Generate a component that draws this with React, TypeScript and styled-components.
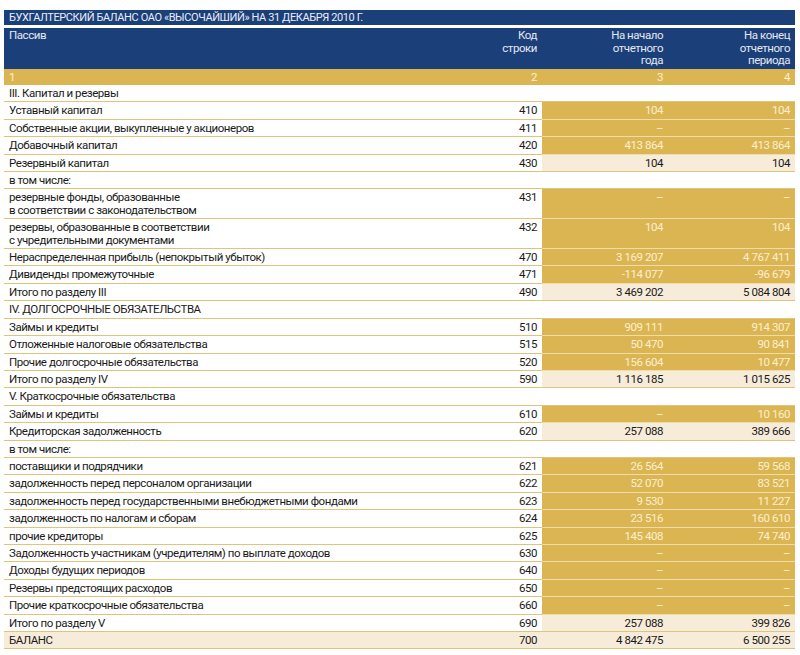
import React from 'react';
import styled, { createGlobalStyle } from 'styled-components';

type Kind = 'section' | 'gold' | 'total' | 'balance';

interface Row {
  label: string;
  code?: string;
  start?: string;
  end?: string;
  kind: Kind;
}

const rows: Row[] = [
  { label: 'III. Капитал и резервы', kind: 'section' },
  { label: 'Уставный капитал', code: '410', start: '104', end: '104', kind: 'gold' },
  { label: 'Собственные акции, выкупленные у акционеров', code: '411', start: '–', end: '–', kind: 'gold' },
  { label: 'Добавочный капитал', code: '420', start: '413 864', end: '413 864', kind: 'gold' },
  { label: 'Резервный капитал', code: '430', start: '104', end: '104', kind: 'total' },
  { label: 'в том числе:', kind: 'section' },
  { label: 'резервные фонды, образованные\nв соответствии с законодательством', code: '431', start: '–', end: '–', kind: 'gold' },
  { label: 'резервы, образованные в соответствии\nс учредительными документами', code: '432', start: '104', end: '104', kind: 'gold' },
  { label: 'Нераспределенная прибыль (непокрытый убыток)', code: '470', start: '3 169 207', end: '4 767 411', kind: 'gold' },
  { label: 'Дивиденды промежуточные', code: '471', start: '-114 077', end: '-96 679', kind: 'gold' },
  { label: 'Итого по разделу III', code: '490', start: '3 469 202', end: '5 084 804', kind: 'total' },
  { label: 'IV. ДОЛГОСРОЧНЫЕ ОБЯЗАТЕЛЬСТВА', kind: 'section' },
  { label: 'Займы и кредиты', code: '510', start: '909 111', end: '914 307', kind: 'gold' },
  { label: 'Отложенные налоговые обязательства', code: '515', start: '50 470', end: '90 841', kind: 'gold' },
  { label: 'Прочие долгосрочные обязательства', code: '520', start: '156 604', end: '10 477', kind: 'gold' },
  { label: 'Итого по разделу IV', code: '590', start: '1 116 185', end: '1 015 625', kind: 'total' },
  { label: 'V. Краткосрочные обязательства', kind: 'section' },
  { label: 'Займы и кредиты', code: '610', start: '–', end: '10 160', kind: 'gold' },
  { label: 'Кредиторская задолженность', code: '620', start: '257 088', end: '389 666', kind: 'total' },
  { label: 'в том числе:', kind: 'section' },
  { label: 'поставщики и подрядчики', code: '621', start: '26 564', end: '59 568', kind: 'gold' },
  { label: 'задолженность перед персоналом организации', code: '622', start: '52 070', end: '83 521', kind: 'gold' },
  { label: 'задолженность перед государственными внебюджетными фондами', code: '623', start: '9 530', end: '11 227', kind: 'gold' },
  { label: 'задолженность по налогам и сборам', code: '624', start: '23 516', end: '160 610', kind: 'gold' },
  { label: 'прочие кредиторы', code: '625', start: '145 408', end: '74 740', kind: 'gold' },
  { label: 'Задолженность участникам (учредителям) по выплате доходов', code: '630', start: '–', end: '–', kind: 'gold' },
  { label: 'Доходы будущих периодов', code: '640', start: '–', end: '–', kind: 'gold' },
  { label: 'Резервы предстоящих расходов', code: '650', start: '–', end: '–', kind: 'gold' },
  { label: 'Прочие краткосрочные обязательства', code: '660', start: '–', end: '–', kind: 'gold' },
  { label: 'Итого по разделу V', code: '690', start: '257 088', end: '399 826', kind: 'total' },
  { label: 'БАЛАНС', code: '700', start: '4 842 475', end: '6 500 255', kind: 'balance' },
];

const NAVY = '#1b3f79';
const GOLD = '#dcb553';
const CREAM = '#f7ecd9';
const LINE = '#dfc47c';

export default function App() {
  return (
    <>
      <GlobalStyle />
      <Page>
        <Title>Бухгалтерский баланс ОАО «Высочайший» на 31 декабря 2010 г.</Title>
        <Table>
          <HeadCell>Пассив</HeadCell>
          <HeadCell $right>Код<br />строки</HeadCell>
          <HeadCell $right>На начало<br />отчетного<br />года</HeadCell>
          <HeadCell $right>На конец<br />отчетного<br />периода</HeadCell>

          <NumCell>1</NumCell>
          <NumCell $right>2</NumCell>
          <NumCell $right>3</NumCell>
          <NumCell $right>4</NumCell>

          {rows.map((r, i) =>
            r.kind === 'section' ? (
              <SectionCell key={i}>{r.label}</SectionCell>
            ) : (
              <React.Fragment key={i}>
                <LabelCell $kind={r.kind}>{r.label}</LabelCell>
                <CodeCell $kind={r.kind}>{r.code}</CodeCell>
                <ValueCell $kind={r.kind}>{r.start}</ValueCell>
                <ValueCell $kind={r.kind}>{r.end}</ValueCell>
              </React.Fragment>
            )
          )}
        </Table>
      </Page>
    </>
  );
}

const GlobalStyle = createGlobalStyle`
  html, body {
    margin: 0;
    padding: 0;
    background: #fff;
  }
  body {
    font-family: Roboto, 'Noto Sans', sans-serif;
    font-size: 11.5px;
    letter-spacing: -0.45px;
    color: #1a1a1a;
  }
`;

const Page = styled.div`
  width: 791px;
  padding: 10px 5px 0 4px;
`;

const Title = styled.div`
  background: ${NAVY};
  color: #e9edf6;
  height: 15px;
  line-height: 15px;
  padding-left: 5px;
  text-transform: uppercase;
  font-size: 11px;
  letter-spacing: -0.4px;
  margin-bottom: 3px;
`;

const Table = styled.div`
  display: grid;
  grid-template-columns: 1fr 62px 126px 127px;
`;

const HeadCell = styled.div<{ $right?: boolean }>`
  background: ${NAVY};
  color: #e3e8f2;
  height: 40px;
  padding: 1px 5px 0 5px;
  line-height: 12.6px;
  text-align: ${(p) => (p.$right ? 'right' : 'left')};
`;

const NumCell = styled.div<{ $right?: boolean }>`
  background: ${GOLD};
  color: #fbefcf;
  height: 16px;
  line-height: 16px;
  padding: 0 5px;
  text-align: ${(p) => (p.$right ? 'right' : 'left')};
`;

const Cell = styled.div`
  padding: 2px 5px;
  line-height: 12.4px;
  border-bottom: 1px solid ${LINE};
  white-space: pre-line;
`;

const SectionCell = styled(Cell)`
  grid-column: 1 / -1;
  background: #fff;
`;

const LabelCell = styled(Cell)<{ $kind: Kind }>`
  background: ${(p) => (p.$kind === 'balance' ? CREAM : '#fff')};
`;

const CodeCell = styled(Cell)<{ $kind: Kind }>`
  background: ${(p) => (p.$kind === 'balance' ? CREAM : '#fff')};
  text-align: right;
`;

const ValueCell = styled(Cell)<{ $kind: Kind }>`
  text-align: right;
  background: ${(p) => (p.$kind === 'gold' ? GOLD : CREAM)};
  color: ${(p) => (p.$kind === 'gold' ? '#fbefcf' : '#1a1a1a')};
  border-bottom-color: ${(p) => (p.$kind === 'gold' ? '#efdca6' : LINE)};
`;
